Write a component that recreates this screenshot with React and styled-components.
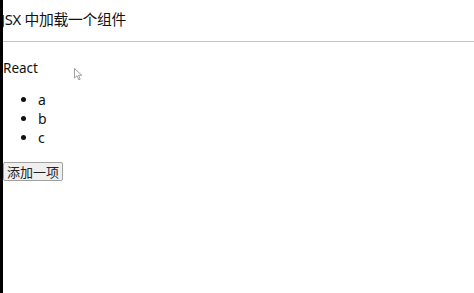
import React, { useState } from "react";
import styled, { createGlobalStyle } from "styled-components";

const Global = createGlobalStyle`
  html, body {
    margin: 0;
    background: #fff;
  }
  body {
    font-family: "Noto Sans", "Noto Sans CJK SC", sans-serif;
    color: #111;
  }
`;

const Page = styled.div`
  position: relative;
  height: 293px;
  overflow: hidden;
  padding-left: 3px;
`;

const EdgeBar = styled.div`
  position: absolute;
  left: 0;
  top: 0;
  bottom: 0;
  width: 3px;
  background: #000;
`;

const Header = styled.div`
  height: 42px;
  display: flex;
  align-items: center;
  margin-left: -2px;
  padding-bottom: 4px;
  box-sizing: border-box;
  font-size: 14.8px;
  border-bottom: 1px solid #c4c4c4;
`;

const Title = styled.span`
  letter-spacing: -0.3px;
`;

const Body = styled.div`
  padding-top: 17px;
  font-size: 13.5px;
`;

const Name = styled.div`
  line-height: 19px;
  height: 19px;
`;

const List = styled.ul`
  margin: 12px 0 0;
  padding-left: 35px;
  line-height: 19px;
  font-size: 14px;
`;

const Item = styled.li`
  height: 19px;
`;

const AddButton = styled.button`
  margin-top: 15px;
  height: 19px;
  width: 60px;
  padding: 0;
  font-family: "Noto Sans CJK SC", sans-serif;
  font-size: 13px;
  color: #222;
  background: #efefef;
  border: 1px solid #a0a0a0;
  border-radius: 2px;
  display: flex;
  align-items: center;
  justify-content: center;
`;

const Pointer = styled.svg`
  position: absolute;
  left: 74px;
  top: 68px;
`;

export default function App() {
  const [items, setItems] = useState(["a", "b", "c"]);
  return (
    <>
      <Global />
      <Page>
        <Header>
          <Title>JSX 中加载一个组件</Title>
        </Header>
        <Body>
          <Name>React</Name>
          <List>
            {items.map((it, i) => (
              <Item key={i}>{it}</Item>
            ))}
          </List>
          <AddButton onClick={() => setItems([...items, "d"])}>添加一项</AddButton>
        </Body>
        <Pointer width="9" height="13" viewBox="0 0 9 13">
          <path d="M0.5 0.5 L0.5 10 L3 7.8 L4.8 11.8 L6.2 11.2 L4.5 7.3 L7.8 7.3 Z" fill="#fff" stroke="#888" strokeWidth="0.8" />
        </Pointer>
        <EdgeBar />
      </Page>
    </>
  );
}
